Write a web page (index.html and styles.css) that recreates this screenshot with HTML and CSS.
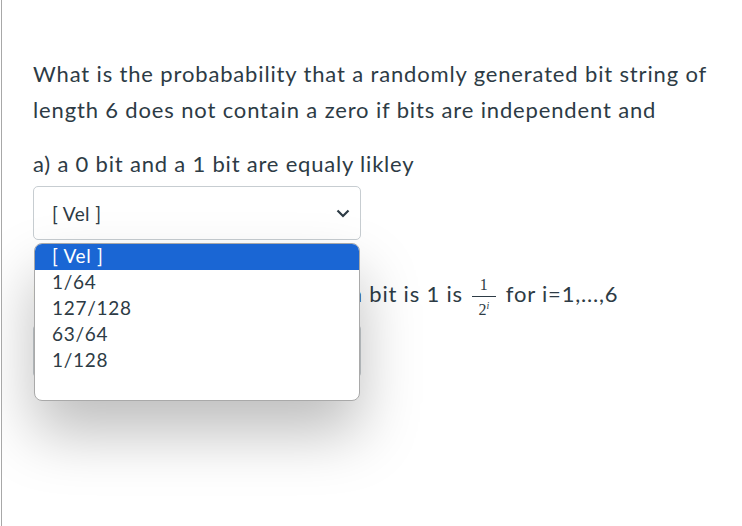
FILE: index.html
```html
<!DOCTYPE html>
<html lang="en">

<head>
    <meta charset="UTF-8">
    <meta name="viewport" content="width=device-width, initial-scale=1.0">
    <title>Quiz question</title>

    <link rel="stylesheet" href="styles.css">
</head>

<body>

    <div class="question">

        <p class="stem">What is the probabability that a randomly generated bit string of length 6 does not contain a zero if bits are independent and</p>

        <p class="part first">a) a 0 bit and a 1 bit are equaly likley</p>

        <div class="pick">
            <div class="select">
                <span>[ Vel ]</span>
                <svg class="chevron" width="14" height="9" viewBox="0 0 14 9">
                    <path d="M1.5 1.5 L7 7 L12.5 1.5" fill="none" stroke="#2d3b45" stroke-width="2.2" />
                </svg>
            </div>

            <div class="listbox">
                <div class="option active">[ Vel ]</div>
                <div class="option">1/64</div>
                <div class="option">127/128</div>
                <div class="option">63/64</div>
                <div class="option">1/128</div>
            </div>
        </div>

        <p class="part second">b) The probabability that the ith bit is 1 is<span class="frac"><span class="num">1</span><span class="den">2<sup>i</sup></span></span>for i=1,...,6</p>

        <div class="select">
            <span>[ Vel ]</span>
        </div>

    </div>

</body>

</html>
```

FILE: styles.css
```css
body {
    margin: 0;
    background-color: #ffffff;
    font-family: Lato, "Open Sans", sans-serif;
    color: #2d3b45;
}

.question {
    height: 526px;
    overflow: hidden;
    box-sizing: border-box;
    border-left: 1px solid #a8a8a8;
    margin-left: 1px;
    padding: 56px 0 0 31px;
}

.stem {
    margin: 0;
    width: 700px;
    font-size: 22px;
    letter-spacing: 0.85px;
    line-height: 36px;
}

.part {
    margin: 0;
    font-size: 22px;
    letter-spacing: 0.8px;
    line-height: 36px;
}

.part.first {
    margin-top: 18px;
}

.part.second {
    margin-top: 36px;
    height: 44px;
    white-space: nowrap;
}

.pick {
    position: relative;
}

.select {
    margin-top: 4px;
    width: 328px;
    height: 54px;
    box-sizing: border-box;
    border: 1px solid #c7cdd1;
    border-radius: 5px;
    display: flex;
    align-items: center;
    justify-content: space-between;
    padding: 0 10px 0 18px;
    font-size: 19px;
    letter-spacing: 0.4px;
    background-color: #ffffff;
}

.chevron {
    display: block;
}

/* open dropdown drawn over the next part */
.listbox {
    position: absolute;
    left: 1px;
    top: 57px;
    width: 326px;
    height: 158px;
    box-sizing: border-box;
    background-color: #ffffff;
    border: 1px solid #a9a9a9;
    border-radius: 8px;
    overflow: hidden;
    box-shadow: 0 32px 60px rgba(0, 0, 0, 0.26);
    z-index: 2;
}

.option {
    height: 26px;
    line-height: 24px;
    padding-left: 17px;
    font-size: 19px;
    letter-spacing: 0.7px;
    color: #2d3b45;
}

.option.active {
    background-color: #1a66d4;
    color: #ffffff;
}

.frac {
    display: inline-flex;
    flex-direction: column;
    align-items: center;
    vertical-align: 12px;
    min-width: 24px;
    font-family: "Liberation Serif", serif;
    font-size: 16px;
    letter-spacing: 0;
    line-height: 13px;
    margin: 0 10px 0 9px;
}

.num {
    align-self: stretch;
    text-align: center;
    border-bottom: 1px solid #2d3b45;
    padding-bottom: 5px;
}

.den {
    padding-top: 6px;
}

.den sup {
    font-size: 10px;
    font-style: italic;
    line-height: 0;
}
```
